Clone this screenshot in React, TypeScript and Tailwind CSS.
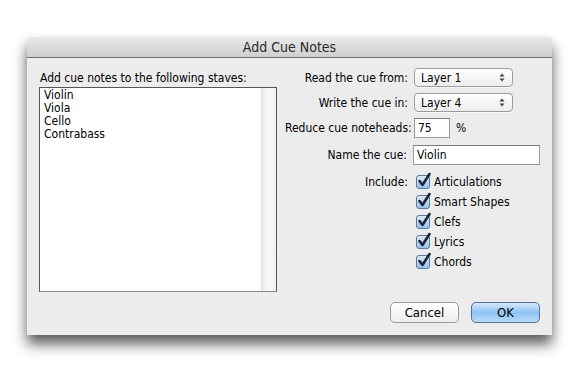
import React from "react";

const font = { fontFamily: '"DejaVu Sans Condensed", "DejaVu Sans", sans-serif' };

function Arrows() {
  return (
    <svg width="6" height="9" viewBox="0 0 6 9">
      <path d="M3 0.5 L5.5 3.5 L0.5 3.5 Z" fill="#444" />
      <path d="M3 8.5 L5.5 5.5 L0.5 5.5 Z" fill="#444" />
    </svg>
  );
}

function Popup({ label }: { label: string }) {
  return (
    <div className="flex items-center justify-between w-[99px] h-[19px] rounded-[4px] border border-[#9c9c9c] bg-gradient-to-b from-white to-[#ededed] pl-[6px] pr-[7px] text-[12px] text-black shadow-[0_1px_0_rgba(255,255,255,0.6)]">
      <span className="leading-none">{label}</span>
      <Arrows />
    </div>
  );
}

function Check({ label }: { label: string }) {
  return (
    <div className="flex items-center h-[20px] gap-[4px]">
      <div className="relative w-[14px] h-[14px]">
        <div className="absolute inset-0 rounded-[3px] border border-[#5b7a9c] bg-gradient-to-b from-[#dcebfb] to-[#98c2ee]" />
        <svg className="absolute -top-[3px] left-[1px]" width="15" height="16" viewBox="0 0 15 16">
          <path d="M2.5 9 L5.5 13 L12.5 2" fill="none" stroke="#1a2535" strokeWidth="2.6" strokeLinecap="round" strokeLinejoin="round" />
        </svg>
      </div>
      <span className="text-[12px] text-black leading-none">{label}</span>
    </div>
  );
}

export default function App() {
  return (
    <div className="w-[580px] h-[372px] bg-white pt-[37px] pl-[27px]" style={font}>
      <div className="w-[525px] h-[298px] bg-[#ececec] rounded-t-[4px] shadow-[0_9px_14px_rgba(0,0,0,0.65)] flex flex-col overflow-hidden">
        <div className="h-[21px] shrink-0 bg-gradient-to-b from-[#e9e9e9] to-[#cfcfcf] border-b border-[#6f6f6f] flex items-center justify-center text-[14px] text-[#2a2a2a] pt-[1px]">
          Add Cue Notes
        </div>
        <div className="flex flex-1 pl-[12px] pt-[12px]">
          <div className="flex flex-col w-[238px]">
            <div className="text-[12px] text-black h-[16px] leading-[16px] pl-[1px] whitespace-nowrap">
              Add cue notes to the following staves:
            </div>
            <div className="mt-[1px] h-[205px] border border-[#555] border-b-[#8a8a8a] bg-white flex">
              <div className="flex-1 pl-[4px] pt-[1px] text-[12px] leading-[13px] text-black">
                <div>Violin</div>
                <div>Viola</div>
                <div>Cello</div>
                <div>Contrabass</div>
              </div>
              <div className="w-[15px] bg-gradient-to-r from-[#ececec] via-[#f8f8f8] to-[#eeeeee] border-l border-[#e0e0e0]" />
            </div>
          </div>
          <div className="flex flex-col ml-[8px] w-[255px] text-[12px] text-black">
            <div className="flex items-center h-[19px] mt-[-2px]">
              <div className="w-[129px] text-right pr-[6px] whitespace-nowrap">Read the cue from:</div>
              <Popup label="Layer 1" />
            </div>
            <div className="flex items-center h-[19px] mt-[6px]">
              <div className="w-[129px] text-right pr-[6px] whitespace-nowrap">Write the cue in:</div>
              <Popup label="Layer 4" />
            </div>
            <div className="flex items-center h-[20px] mt-[6px]">
              <div className="w-[129px] text-right pr-[6px] whitespace-nowrap">Reduce cue noteheads:</div>
              <div className="w-[36px] h-[20px] border border-[#9a9a9a] border-t-[#7d7d7d] bg-white pl-[3px] leading-[18px]">75</div>
              <span className="ml-[6px]">%</span>
            </div>
            <div className="flex items-center h-[20px] mt-[7px]">
              <div className="w-[129px] text-right pr-[6px] whitespace-nowrap">Name the cue:</div>
              <div className="w-[128px] h-[20px] border border-[#9a9a9a] border-t-[#7d7d7d] bg-white pl-[3px] leading-[18px]">Violin</div>
            </div>
            <div className="flex mt-[7px]">
              <div className="w-[129px] text-right pr-[6px] h-[20px] leading-[20px]">Include:</div>
              <div className="flex flex-col pl-[2px]">
                <Check label="Articulations" />
                <Check label="Smart Shapes" />
                <Check label="Clefs" />
                <Check label="Lyrics" />
                <Check label="Chords" />
              </div>
            </div>
            <div className="flex justify-end gap-[12px] mt-[30px]">
              <div className="w-[69px] h-[21px] rounded-[5px] border border-[#9a9a9a] bg-gradient-to-b from-white to-[#eeeeee] flex items-center justify-center text-[13px]">
                Cancel
              </div>
              <div className="w-[69px] h-[21px] rounded-[5px] border border-[#5a6f9a] bg-gradient-to-b from-[#d4e9fd] via-[#8fc2f3] to-[#b7dcfb] flex items-center justify-center text-[13px]">
                OK
              </div>
            </div>
          </div>
        </div>
      </div>
    </div>
  );
}
